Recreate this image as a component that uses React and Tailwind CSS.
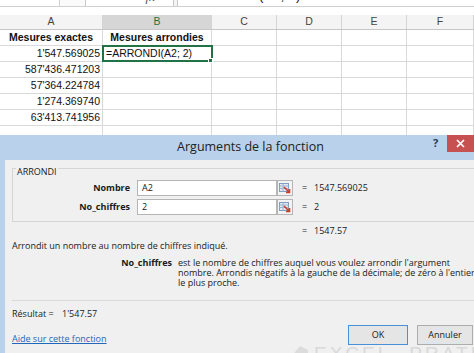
import React from "react";

const cols = [
  { l: "A", w: "w-[103px]" },
  { l: "B", w: "w-[109px]" },
  { l: "C", w: "w-[65px]" },
  { l: "D", w: "w-[65px]" },
  { l: "E", w: "w-[65px]" },
  { l: "F", w: "flex-1" },
];

const rows = [
  ["Mesures exactes", "Mesures arrondies", true],
  ["1'547.569025", "=ARRONDI(A2; 2)", false],
  ["587'436.471203", "", false],
  ["57'364.224784", "", false],
  ["1'274.369740", "", false],
  ["63'413.741956", "", false],
  ["", "", false],
  ["", "", false],
];

function RangeIcon() {
  return (
    <div className="w-[16px] h-[16px] shrink-0 border border-[#b5b5b5] bg-[#f3f3f3] flex items-center justify-center">
      <svg width="12" height="11" viewBox="0 0 12 11">
        <rect x="0.5" y="0.5" width="9" height="8" fill="#dfe8f3" stroke="#7f9cc0" />
        <line x1="0.5" y1="3" x2="9.5" y2="3" stroke="#9db3cf" />
        <line x1="0.5" y1="5.5" x2="9.5" y2="5.5" stroke="#9db3cf" />
        <line x1="4" y1="0.5" x2="4" y2="8.5" stroke="#9db3cf" />
        <path d="M5 4 L10.5 9.5 M10.5 6 L10.5 9.5 L7 9.5" stroke="#d23a2a" strokeWidth="1.6" fill="none" />
      </svg>
    </div>
  );
}

function Sheet() {
  return (
    <div className="h-[135px] overflow-hidden bg-white font-['Liberation_Sans',sans-serif]">
      <div className="h-[7px] flex border-b border-[#d0d0d0] overflow-hidden">
        <div className="w-[60px] border-r border-[#d0d0d0] bg-white" />
        <div className="w-[25px] bg-[#fafafa]" />
        <div className="w-[89px] border-x border-[#c8c8c8] bg-white overflow-hidden">
          <div className="flex gap-[16px] pl-[9px] text-[13px] leading-[13px] text-[#555] -mt-[10px]">
            <span>×</span>
            <span>✓</span>
            <span className="italic font-['Liberation_Serif',serif]">fx</span>
          </div>
        </div>
        <div className="w-[3px] bg-[#f4f4f4]" />
        <div className="flex-1 border-l border-[#c8c8c8] overflow-hidden">
          <div className="pl-[8px] text-[14px] leading-[14px] text-[#222] -mt-[12px]">=ARRONDI(A2; 2)</div>
        </div>
      </div>
      <div className="h-[8px] bg-white" />
      <div className="h-[15px] flex border-b border-[#c6c6c6] bg-[#f4f4f4]">
        {cols.map((c) => (
          <div
            key={c.l}
            className={`${c.w} flex items-center justify-center text-[10.5px] border-r border-[#d4d4d4] ${
              c.l === "B" ? "bg-[#d6d6d6] text-[#217346]" : "text-[#444]"
            }`}
          >
            {c.l}
          </div>
        ))}
      </div>
      {rows.map((r, i) => (
        <div key={i} className="h-[16px] flex border-b border-[#d9d9d9] text-[10.5px] text-[#111]">
          <div
            className={`w-[103px] border-r border-[#d9d9d9] flex items-center px-[2px] ${
              r[2] ? "justify-center font-bold" : "justify-end"
            }`}
          >
            {r[0]}
          </div>
          <div
            className={`w-[109px] border-r border-[#d9d9d9] flex items-center ${
              r[2] ? "justify-center font-bold" : "justify-start"
            } ${i === 1 ? "relative outline-2 outline-[#217346] -outline-offset-1 pl-[3px]" : ""}`}
          >
            {r[1]}
            {i === 1 && (
              <div className="absolute -right-[2px] -bottom-[2px] w-[5px] h-[5px] bg-[#217346] border border-white" />
            )}
          </div>
          <div className="w-[65px] border-r border-[#d9d9d9]" />
          <div className="w-[65px] border-r border-[#d9d9d9]" />
          <div className="w-[65px] border-r border-[#d9d9d9]" />
          <div className="flex-1 border-r border-[#d9d9d9]" />
        </div>
      ))}
    </div>
  );
}

function Dialog() {
  const txt = "font-['Open_Sans',sans-serif] text-[9px] text-[#1a1a1a]";
  return (
    <div className={`h-[218px] bg-[#b9d1ea] pl-[5px] flex flex-col ${txt}`}>
      <div className="h-[25px] flex items-start shrink-0">
        <div className="flex-1 h-full flex items-center justify-center pl-[63px] text-[12.5px] text-[#222]">
          Arguments de la fonction
        </div>
        <div className="w-[14px] h-[17px] flex items-center justify-start text-[11px] font-bold text-[#2a3a55]">?</div>
        <div className="w-[27px] h-[17px] bg-[#c75050] flex items-center justify-center">
          <svg width="9" height="9" viewBox="0 0 9 9">
            <path d="M1 1 L8 8 M8 1 L1 8" stroke="#fff" strokeWidth="1.7" />
          </svg>
        </div>
      </div>
      <div className="flex-1 bg-[#f0f0f0] relative overflow-hidden flex flex-col pl-[7px]">
        <div className="mt-[8px] h-[54px] shrink-0 border border-[#d5d5d5] border-r-0 flex flex-col">
          <div className="-mt-[2px] ml-[3px] w-fit px-[1px] bg-[#f0f0f0] leading-[10px]">ARRONDI</div>
          <div className="mt-[3px] flex items-center h-[16px]">
            <div className="w-[117px] shrink-0 text-right font-bold">Nombre</div>
            <div className="ml-[7px] w-[140px] shrink-0 h-[16px] bg-white border border-[#b5b5b5] flex items-center pl-[4px]">A2</div>
            <RangeIcon />
            <div className="ml-[9px] w-[12px]">=</div>
            <div>1547.569025</div>
          </div>
          <div className="mt-[3px] flex items-center h-[16px]">
            <div className="w-[117px] shrink-0 text-right font-bold">No_chiffres</div>
            <div className="ml-[7px] w-[140px] shrink-0 h-[16px] bg-white border border-[#b5b5b5] flex items-center pl-[4px]">2</div>
            <RangeIcon />
            <div className="ml-[9px] w-[12px]">=</div>
            <div>2</div>
          </div>
        </div>
        <div className="mt-[3px] h-[12px] leading-[12px] flex">
          <div className="ml-[290px] w-[12px]">=</div>
          <div>1547.57</div>
        </div>
        <div className="mt-[3px] h-[12px] leading-[12px]">Arrondit un nombre au nombre de chiffres indiqué.</div>
        <div className="mt-[6px] flex leading-[10px] whitespace-nowrap">
          <div className="w-[160px] shrink-0 text-right font-bold">No_chiffres</div>
          <div className="ml-[6px]">
            <div>est le nombre de chiffres auquel vous voulez arrondir l'argument</div>
            <div>nombre. Arrondis négatifs à la gauche de la décimale; de zéro à l'entier</div>
            <div>le plus proche.</div>
          </div>
        </div>
        <div className="mt-[12px] h-px bg-[#dadada]" />
        <div className="flex justify-between">
          <div className="flex flex-col">
            <div className="mt-[7px] h-[12px] leading-[12px] flex">
              <span className="w-[50px]">Résultat =</span>
              <span>1'547.57</span>
            </div>
            <div className="mt-[13px] h-[12px] leading-[12px] text-[#2466b8] underline">Aide sur cette fonction</div>
          </div>
          <div className="flex items-start gap-[9px] mt-[24px] pr-[1px]">
            <div className="w-[60px] h-[20px] border border-[#4a90d8] bg-[#e5e5e5] flex items-center justify-center">OK</div>
            <div className="w-[56px] h-[20px] border border-[#adadad] bg-[#e5e5e5] flex items-center justify-center">Annuler</div>
          </div>
        </div>
        <div className="absolute left-[285px] top-[184px] flex items-start gap-[6px] text-[#d9d9d9] text-[19px] leading-[19px] font-['Liberation_Sans',sans-serif] tracking-[3px] pointer-events-none">
          <svg width="18" height="14" viewBox="0 0 18 14"><path d="M0 14 L10 2 L18 6 L18 14 Z" fill="#dcdcdc" /></svg>
          <span>EXCEL</span>
          <span className="ml-[12px]">PRATIQUE</span>
        </div>
      </div>
    </div>
  );
}

export default function App() {
  return (
    <div className="w-[474px] h-[353px] overflow-hidden bg-white">
      <Sheet />
      <Dialog />
    </div>
  );
}
